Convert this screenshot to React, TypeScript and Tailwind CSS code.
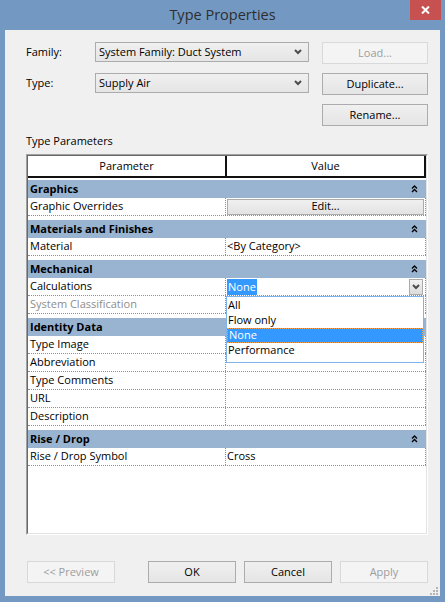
import type { ReactNode } from "react";

type Row = { name: string; value?: ReactNode; dim?: boolean; kind?: "edit" | "combo" };
type Group = { title: string; rows: Row[] };

const GROUPS: Group[] = [
  { title: "Graphics", rows: [{ name: "Graphic Overrides", kind: "edit" }] },
  { title: "Materials and Finishes", rows: [{ name: "Material", value: "<By Category>" }] },
  {
    title: "Mechanical",
    rows: [
      { name: "Calculations", kind: "combo" },
      { name: "System Classification", dim: true },
    ],
  },
  {
    title: "Identity Data",
    rows: [
      { name: "Type Image" },
      { name: "Abbreviation" },
      { name: "Type Comments" },
      { name: "URL" },
      { name: "Description" },
    ],
  },
  { title: "Rise / Drop", rows: [{ name: "Rise / Drop Symbol", value: "Cross" }] },
];

const OPTIONS = ["All", "Flow only", "None", "Performance"];

function Chevron({ className = "" }: { className?: string }) {
  return (
    <svg width="8" height="6" viewBox="0 0 8 6" className={className}>
      <path d="M1 1 L4 4 L7 1" stroke="#4d4d4d" strokeWidth="2" fill="none" />
    </svg>
  );
}

function Collapse() {
  return (
    <svg width="7" height="8" viewBox="0 0 7 8">
      <path d="M1 3.5 L3.5 1 L6 3.5 M1 7 L3.5 4.5 L6 7" stroke="#000" strokeWidth="1.3" fill="none" />
    </svg>
  );
}

function Button({ label, disabled, className = "" }: { label: string; disabled?: boolean; className?: string }) {
  return (
    <div
      className={
        "flex h-[22px] items-center justify-center border " +
        (disabled
          ? "border-[#d9d9d9] bg-[#f4f4f4] text-[#9d9d9d] "
          : "border-[#acacac] bg-linear-to-b from-[#f0f0f0] to-[#e5e5e5] text-black ") +
        className
      }
    >
      {label}
    </div>
  );
}

function Combo({ value }: { value: string }) {
  return (
    <div className="flex h-[20px] w-[214px] items-center justify-between border border-[#acacac] bg-linear-to-b from-[#f0f0f0] to-[#e5e5e5] pl-[3px] pr-[6px]">
      <span>{value}</span>
      <Chevron />
    </div>
  );
}

function DataRow({ row }: { row: Row }) {
  return (
    <div className="flex h-[18px] border-b border-dotted border-[#8f8f8f]">
      <div
        className={
          "flex w-[198px] items-center border-r border-dotted border-[#8f8f8f] pl-[2px] " +
          (row.dim ? "text-[#8d8d8d]" : "text-black")
        }
      >
        {row.name}
      </div>
      <div className="relative flex flex-1 items-center border-r border-dotted border-[#8f8f8f] pl-[1px]">
        {row.kind === "edit" && (
          <div className="mr-[1px] flex h-[16px] w-full items-center justify-center border border-[#acacac] bg-linear-to-b from-[#f0f0f0] to-[#e3e3e3]">
            Edit...
          </div>
        )}
        {row.kind === "combo" && (
          <>
            <span className="bg-[#3399ff] px-[1px] leading-[16px] text-white">None</span>
            <div className="absolute right-[2px] top-[1px] flex h-[16px] w-[14px] items-center justify-center border border-[#acacac] bg-linear-to-b from-[#f2f2f2] to-[#dcdcdc]">
              <Chevron />
            </div>
          </>
        )}
        {typeof row.value === "string" && <span>{row.value}</span>}
      </div>
    </div>
  );
}

export default function App() {
  return (
    <div className="flex h-[602px] w-[445px] flex-col bg-[#7399c3] font-['Open_Sans',sans-serif] text-[11px] text-black">
      {/* title bar */}
      <div className="relative flex h-[30px] items-center justify-center">
        <span className="text-[14.5px] text-[#2e2e2e]">Type Properties</span>
        <div className="absolute left-[410px] top-0 flex h-[20px] w-[31px] items-center justify-center bg-[#c75050]">
          <svg width="9" height="8" viewBox="0 0 9 8">
            <path d="M1 0.5 L8 7.5 M8 0.5 L1 7.5" stroke="#fff" strokeWidth="2" />
          </svg>
        </div>
      </div>

      {/* client */}
      <div className="relative mx-[5px] h-[566px] bg-[#f0f0f0] pt-[12px]">
        <div className="flex flex-col gap-[9px] pl-[21px]">
          <div className="flex items-start">
            <div className="flex h-[20px] w-[69px] items-center">Family:</div>
            <Combo value="System Family: Duct System" />
            <Button label="Load..." disabled className="ml-[13px] w-[106px]" />
          </div>
          <div className="flex items-start">
            <div className="flex h-[20px] w-[69px] items-center">Type:</div>
            <Combo value="Supply Air" />
            <Button label="Duplicate..." className="ml-[13px] w-[106px]" />
          </div>
          <div className="flex pl-[296px]">
            <Button label="Rename..." className="w-[106px]" />
          </div>
        </div>

        <div className="mt-[8px] pl-[21px] leading-[14px]">Type Parameters</div>

        {/* property grid */}
        <div className="ml-[21px] mt-[6px] h-[381px] w-[402px] border border-b-white border-l-[#a0a0a0] border-r-white border-t-[#a0a0a0]">
          <div className="h-full border border-b-[#e3e3e3] border-l-[#696969] border-r-[#e3e3e3] border-t-[#696969] bg-white">
            <div className="flex h-[22px] border-b-2 border-[#111]">
              <div className="flex w-[199px] items-center justify-center border-r-2 border-[#111]">Parameter</div>
              <div className="flex flex-1 items-center justify-center border-r-2 border-[#111]">Value</div>
            </div>
            {GROUPS.map((g, i) => (
              <div key={g.title} className={i === 0 ? "mt-[2px]" : "mt-[4px]"}>
                <div className="flex h-[18px] items-center justify-between bg-[#99b4d1] pl-[2px] pr-[8px] font-bold">
                  <span>{g.title}</span>
                  <Collapse />
                </div>
                {g.rows.map((r) => (
                  <DataRow key={r.name} row={r} />
                ))}
              </div>
            ))}
          </div>
        </div>

        {/* dropdown list */}
        <div className="absolute left-[221px] top-[266px] h-[67px] w-[198px] border border-[#7eb4ea] bg-white pt-[1px]">
          {OPTIONS.map((o) => (
            <div
              key={o}
              className={
                "flex h-[15px] items-center pl-[1px] " +
                (o === "None" ? "border border-dotted border-[#f0a050] bg-[#3399ff] text-white" : "")
              }
            >
              {o}
            </div>
          ))}
        </div>

        {/* bottom buttons */}
        <div className="mt-[26px] flex pl-[22px]">
          <Button label="<< Preview" disabled className="w-[88px]" />
          <Button label="OK" className="ml-[33px] w-[88px]" />
          <Button label="Cancel" className="ml-[8px] w-[88px]" />
          <Button label="Apply" disabled className="ml-[8px] w-[88px]" />
        </div>

        {/* resize grip */}
        <svg width="9" height="9" viewBox="0 0 9 9" className="absolute bottom-[1px] right-[2px]">
          <g fill="#b5b5b5">
            <rect x="7" y="1" width="2" height="2" />
            <rect x="4" y="4" width="2" height="2" />
            <rect x="7" y="4" width="2" height="2" />
            <rect x="1" y="7" width="2" height="2" />
            <rect x="4" y="7" width="2" height="2" />
            <rect x="7" y="7" width="2" height="2" />
          </g>
        </svg>
      </div>
    </div>
  );
}
